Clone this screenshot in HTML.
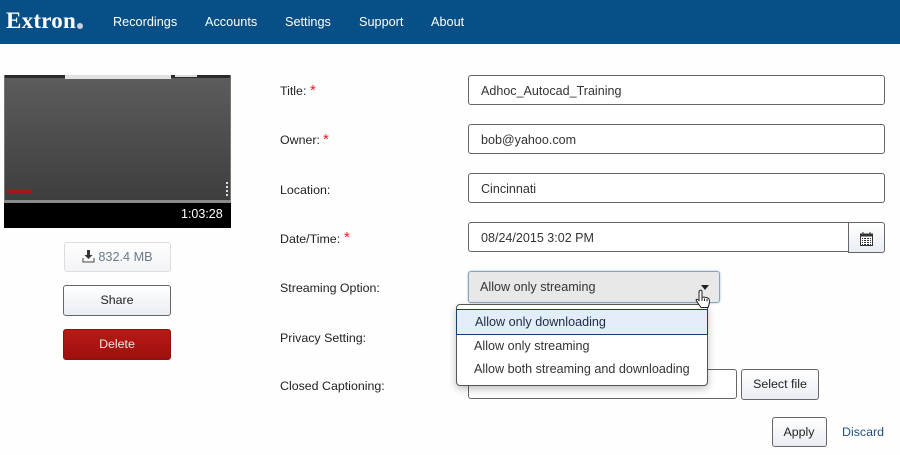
<!DOCTYPE html>
<html><head><meta charset="utf-8"><style>
html,body{margin:0;padding:0;width:900px;height:455px;overflow:hidden;background:#fefefe;font-family:"Liberation Sans",sans-serif;color:#222}
.a{position:absolute;white-space:nowrap}
.nav{left:0;top:0;width:900px;height:43.5px;background:#064f87}
.n{color:#fff;font-size:12.7px;top:14px;line-height:16px}
.l{font-size:12.4px;left:280px;line-height:16px}
.s{color:#f01c24;font-size:15px;line-height:16px}
.i{left:468px;width:415px;height:28px;border:1px solid #666;border-radius:3px;background:#fff;font-size:12.55px;line-height:30px;text-indent:12px;color:#333;box-sizing:content-box}
.b{border:1px solid #666;border-radius:3px;background:linear-gradient(#fff,#e9edf3);text-align:center;box-sizing:border-box;font-size:12.4px;color:#222}
</style></head><body>
<div class="a nav"></div>
<div class="a" style="left:6px;top:8px;color:#fff;font:bold 23px/26px 'Liberation Serif',serif;letter-spacing:.25px">Extron</div>
<div class="a" style="left:77px;top:23px;width:6px;height:6px;border-radius:50%;background:#c5d2de"></div>
<div class="a n" style="left:113px">Recordings</div>
<div class="a n" style="left:205px">Accounts</div>
<div class="a n" style="left:285px">Settings</div>
<div class="a n" style="left:359px">Support</div>
<div class="a n" style="left:431px">About</div>

<div class="a" style="left:4px;top:75px;width:227px;height:153px;background:#77756c"></div>
<div class="a" style="left:4px;top:203px;width:227px;height:25px;background:#000"></div>
<div class="a" style="left:5px;top:78px;width:225px;height:122px;background:linear-gradient(#5c5c5c,#3e3e3e)"></div>
<div class="a" style="left:5px;top:75px;width:225px;height:3px;background:#2a2a2a"></div>
<div class="a" style="left:65px;top:75px;width:106px;height:4px;background:#e2e2e2"></div>
<div class="a" style="left:175px;top:75px;width:22px;height:2px;background:#ddd"></div>
<div class="a" style="left:4px;top:200px;width:227px;height:3px;background:#8a8a8a"></div>
<div class="a" style="left:7px;top:189px;width:25px;height:4px;background:#a8161c"></div>
<div class="a" style="left:226px;top:182px;width:2px;height:16px;background:repeating-linear-gradient(#ddd 0 2px,#444 2px 4px)"></div>
<div class="a" style="left:181px;top:206px;color:#fff;font-size:12.5px;line-height:16px">1:03:28</div>

<div class="a b" style="left:64px;top:242px;width:107px;height:30px;border-color:#ddd;line-height:28px;color:#6a7a8c;font-size:12.7px;background:linear-gradient(#fff,#f2f3f5);text-indent:16px">832.4 MB</div>
<svg class="a" style="left:82px;top:250px" width="13" height="13" viewBox="0 0 13 13"><path d="M5 0h3v5h2.500L6.500 9 2.500 5H5z" fill="#333"/><path d="M1 8v4h11V8" fill="none" stroke="#444" stroke-width="1"/></svg>
<div class="a b" style="left:63px;top:285px;width:108px;height:31px;line-height:29px">Share</div>
<div class="a b" style="left:63px;top:329px;width:108px;height:31px;line-height:29px;background:linear-gradient(#b81a14,#9e100e);border-color:#8a1210;color:#f4e6e6">Delete</div>

<div class="a l" style="top:83px">Title:</div><div class="a s" style="left:310px;top:83px">*</div>
<div class="a l" style="top:132px">Owner:</div><div class="a s" style="left:323px;top:132px">*</div>
<div class="a l" style="top:182px">Location:</div>
<div class="a l" style="top:231px">Date/Time:</div><div class="a s" style="left:344px;top:230px">*</div>
<div class="a l" style="top:280px">Streaming Option:</div>
<div class="a l" style="top:330px">Privacy Setting:</div>
<div class="a l" style="top:378px">Closed Captioning:</div>

<div class="a i" style="top:75px">Adhoc_Autocad_Training</div>
<div class="a i" style="top:124px">bob@yahoo.com</div>
<div class="a i" style="top:173px">Cincinnati</div>
<div class="a i" style="top:222px;width:379px;line-height:31px;border-radius:3px 0 0 3px">08/24/2015 3:02 PM</div>
<div class="a b" style="left:848px;top:222px;width:37px;height:31px;border-radius:0 3px 3px 0"></div>
<svg class="a" style="left:859px;top:232px" width="15" height="14" viewBox="0 0 15 14"><path d="M1.500 2.500h12v11h-12z" fill="#fff" stroke="#333"/><path d="M1 1.500h13v3H1z" fill="#333"/><path d="M4 0v2M11 0v2" stroke="#333"/><path d="M3 6.500h9M3 8.500h9M3 10.500h9M3 12.500h9" stroke="#333"/><path d="M4.500 5v8M7.500 5v8M10.500 5v8" stroke="#fff"/></svg>

<div class="a" style="left:468px;top:271px;width:252px;height:32px;box-sizing:border-box;border:1px solid #8aa3bd;box-shadow:0 0 2px #9fc0dc;border-radius:3px;background:#e8e8e8;font-size:12.6px;line-height:30px;text-indent:11px;color:#333">Allow only streaming</div>
<svg class="a" style="left:700px;top:285px" width="10" height="6"><path d="M1 0h8L5 5z" fill="#222"/></svg>

<div class="a" style="left:468px;top:369px;width:269px;height:30px;box-sizing:border-box;border:1px solid #666;border-radius:3px;background:#fff"></div>
<div class="a b" style="left:741px;top:369px;width:78px;height:31px;line-height:29px">Select file</div>

<div class="a" style="left:456px;top:304px;width:252px;height:82px;box-sizing:border-box;border:1px solid #555;border-radius:4px;background:#fff;box-shadow:0 3px 8px rgba(0,0,0,.25)"></div>
<div class="a" style="left:456px;top:309px;width:252px;height:26px;box-sizing:border-box;border:1.500px solid #13406f;background:#e3edf9"></div>
<div class="a" style="left:475px;top:314px;font-size:12.6px;line-height:17px;color:#1c2a44">Allow only downloading</div>
<div class="a" style="left:474px;top:338px;font-size:12.6px;line-height:17px;color:#333">Allow only streaming</div>
<div class="a" style="left:474px;top:361px;font-size:12.6px;line-height:17px;color:#333">Allow both streaming and downloading</div>

<svg class="a" style="left:695px;top:289px" width="16" height="22" viewBox="0 0 16 22"><path d="M5 1.500c1-.8 2-.3 2 1v6c2-.8 6 0 7 1.500.8 2 .5 5-1 8.500H6C4 15.500 2 13 1 11c.3-1 1.500-1 3 .5V3c0-.7.400-1.200 1-1.500z" fill="#fff" stroke="#222"/><path d="M7 9v3M9.500 9.500V12M12 10v2.500" stroke="#222" fill="none"/></svg>

<div class="a b" style="left:772px;top:417px;width:55px;height:30px;line-height:28px;text-indent:-1px">Apply</div>
<div class="a" style="left:842px;top:424px;font-size:12.4px;line-height:16px;color:#1f4e86">Discard</div>
</body></html>
